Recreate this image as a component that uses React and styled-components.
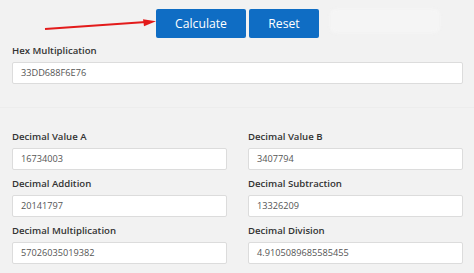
import React from "react";
import styled, { createGlobalStyle } from "styled-components";

const Global = createGlobalStyle`
  html, body { margin: 0; padding: 0; background: #f2f2f2; }
  body { font-family: "Open Sans", "Liberation Sans", sans-serif; }
`;

const Page = styled.div`
  width: 474px;
  height: 273px;
  overflow: hidden;
  background: #f2f2f2;
  padding: 0 11px 0 12px;
  box-sizing: border-box;
`;

const Toolbar = styled.div`
  position: relative;
  display: flex;
  gap: 3px;
  padding: 9px 0 0 144px;
  height: 29px;
`;

const Button = styled.button`
  width: ${(p) => p.$w}px;
  height: 29px;
  border: none;
  border-radius: 2px;
  background: #0f6dc4;
  color: #fff;
  font-family: "Open Sans", "Liberation Sans", sans-serif;
  font-size: 12.2px;
  padding: 0;
  cursor: pointer;
`;

const Ghost = styled.div`
  position: absolute;
  left: 318px;
  top: 9px;
  width: 110px;
  height: 24px;
  border-radius: 6px;
  background: #f5f5f5;
  filter: blur(1.5px);
`;

const Arrow = styled.svg`
  position: absolute;
  left: 20px;
  top: 15px;
`;

const Field = styled.div`
  display: flex;
  flex-direction: column;
`;

const Label = styled.label`
  font-size: 9.6px;
  line-height: 15px;
  font-weight: 600;
  color: #333;
  margin-bottom: 4px;
`;

const Input = styled.div`
  background: #fff;
  border: 1px solid #dcdcdc;
  border-radius: 2px;
  box-sizing: border-box;
  height: 22px;
  padding-left: 8px;
  font-size: 9.2px;
  line-height: 20px;
  color: #555;
`;

const HexSection = styled.div`
  margin-top: 5px;
`;

const Divider = styled.div`
  height: 1px;
  background: #ededed;
  margin: 23px -12px 21px;
`;

const Grid = styled.div`
  display: grid;
  grid-template-columns: 215px 215px;
  column-gap: 21px;
  row-gap: 6px;
`;

const fields = [
  ["Decimal Value A", "16734003"],
  ["Decimal Value B", "3407794"],
  ["Decimal Addition", "20141797"],
  ["Decimal Subtraction", "13326209"],
  ["Decimal Multiplication", "57026035019382"],
  ["Decimal Division", "4.9105089685585455"],
];

export default function App() {
  return (
    <Page>
      <Global />
      <Toolbar>
        <Arrow width="126" height="20" viewBox="0 0 126 20">
          <line x1="13" y1="14" x2="114" y2="7" stroke="#e31b1b" strokeWidth="2.2" />
          <polygon points="111,4.3 124,6.2 112,11.2" fill="#e31b1b" />
        </Arrow>
        <Button $w={90}>Calculate</Button>
        <Button $w={70}>Reset</Button>
        <Ghost />
      </Toolbar>
      <HexSection>
        <Field>
          <Label>Hex Multiplication</Label>
          <Input>33DD688F6E76</Input>
        </Field>
      </HexSection>
      <Divider />
      <Grid>
        {fields.map(([l, v]) => (
          <Field key={l}>
            <Label>{l}</Label>
            <Input>{v}</Input>
          </Field>
        ))}
      </Grid>
    </Page>
  );
}
